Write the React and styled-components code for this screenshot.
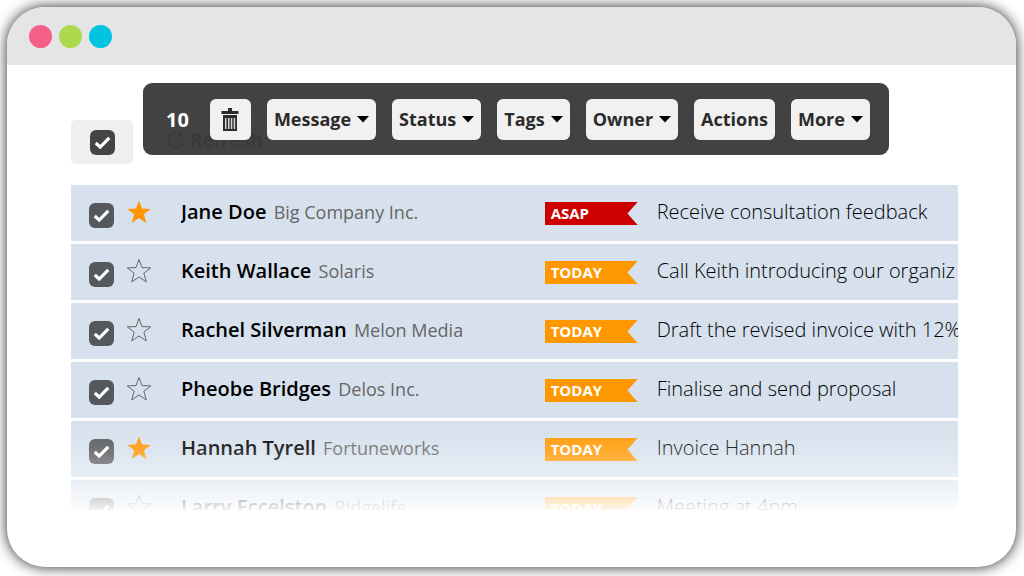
import React, { useState } from 'react';
import styled, { createGlobalStyle } from 'styled-components';

const contacts = [
    { name: 'Jane Doe', company: 'Big Company Inc.', flag: 'ASAP', task: 'Receive consultation feedback', starred: true },
    { name: 'Keith Wallace', company: 'Solaris', flag: 'TODAY', task: 'Call Keith introducing our organiz' },
    { name: 'Rachel Silverman', company: 'Melon Media', flag: 'TODAY', task: 'Draft the revised invoice with 12%' },
    { name: 'Pheobe Bridges', company: 'Delos Inc.', flag: 'TODAY', task: 'Finalise and send proposal' },
    { name: 'Hannah Tyrell', company: 'Fortuneworks', flag: 'TODAY', task: 'Invoice Hannah', starred: true },
    { name: 'Larry Eccelston', company: 'Ridgelife', flag: 'TODAY', task: 'Meeting at 4pm' },
];

const Check = ({ label, dark }) => (
    <CheckBox $dark={dark}>
        <input type="checkbox" defaultChecked aria-label={label} />
        <svg viewBox="0 0 24 24" aria-hidden="true">
            <path d="M5.500 12.500l4.300 3.800L18.500 7.500" />
        </svg>
    </CheckBox>
);

const Star = ({ starred, name }) => {
    const [on, setOn] = useState(!!starred);
    return (
        <StarButton type="button" $on={on} aria-pressed={on} aria-label={`Star ${name}`} onClick={() => setOn(!on)}>
            <svg viewBox="0 0 24 24" aria-hidden="true">
                <path d="M12 .5L15 8.600 23.700 8.900 16.850 14.200 19.300 22.900 12 18 4.700 22.900 7.150 14.200 .3 8.900 9 8.600z" />
            </svg>
        </StarButton>
    );
};

const Menu = ({ children }) => (
    <ToolButton type="button" aria-haspopup="menu">
        {children}
        <Caret viewBox="0 0 12 7" aria-hidden="true"><path d="M0 0h12L6 6.600z" /></Caret>
    </ToolButton>
);

const App = () => (
    <>
        <GlobalStyle />
        <Window>
            <TitleBar>
                <Dot $color="#f66088" />
                <Dot $color="#acd94e" />
                <Dot $color="#00c4e0" />
            </TitleBar>
            <Content>
                <Header>
                    <SelectAll><Check label="Select all" dark /></SelectAll>
                    <Refresh type="button">
                        <svg viewBox="0 0 18 18" aria-hidden="true"><path d="M14 3.500A7.200 7.200 0 1 0 16 11M14.500 0v4.500H10" /></svg>
                        Refresh
                    </Refresh>
                    <Toolbar role="toolbar">
                        <Count>10</Count>
                        <ToolButton type="button" aria-label="Delete" $square>
                            <svg width="18" height="23" viewBox="0 0 18 23" aria-hidden="true">
                                <path fill="#2b2b2b" d="M7 0h4v3h6.500v3H.5V3H7zM2 7h14v16H2z" />
                                <path fill="#d4d4d4" d="M4 10h1.500v11H4zM7 10h1.500v11H7zM9.800 10h1.500v11H9.800zM12.700 10h1.500v11h-1.500z" />
                            </svg>
                        </ToolButton>
                        <Menu>Message</Menu>
                        <Menu>Status</Menu>
                        <Menu>Tags</Menu>
                        <Menu>Owner</Menu>
                        <ToolButton type="button">Actions</ToolButton>
                        <Menu>More</Menu>
                    </Toolbar>
                </Header>
                <List>
                    <Table>
                        <colgroup>
                            <col width="56" />
                            <col width="54" />
                            <col width="41%" />
                            <col width="112" />
                            <col />
                        </colgroup>
                        <tbody>
                            {contacts.map(item => (
                                <Row key={item.name}>
                                    <CheckCell><Check label={`Select ${item.name}`} /></CheckCell>
                                    <Cell><Star starred={item.starred} name={item.name} /></Cell>
                                    <Cell><Name>{item.name}</Name> <Company>{item.company}</Company></Cell>
                                    <FlagCell><Ribbon $urgent={item.flag === 'ASAP'}>{item.flag}</Ribbon></FlagCell>
                                    <Cell>{item.task}</Cell>
                                </Row>
                            ))}
                        </tbody>
                    </Table>
                </List>
            </Content>
        </Window>
    </>
);

export default App;

const GlobalStyle = createGlobalStyle`
    * {
        box-sizing: border-box;
    }
    body {
        margin: 0;
        background: #fff;
        overflow: hidden;
        font-family: 'Open Sans', 'Noto Sans', sans-serif;
    }
    button {
        font-family: inherit;
        cursor: pointer;
    }
`;

const Window = styled.main`
    min-height: calc(100vh - 16px);
    margin: 7px 8px 9px 7px;
    border-radius: 38px;
    overflow: hidden;
    background: #fff;
    box-shadow: 0 0 14px rgba(0, 0, 0, 0.85);
`;

const TitleBar = styled.header`
    display: flex;
    align-items: center;
    gap: 7px;
    height: 58px;
    padding-left: 22px;
    background: #e5e5e5;
`;

const Dot = styled.span`
    width: 23px;
    height: 23px;
    border-radius: 50%;
    background: ${props => props.$color};
`;

const Content = styled.section`
    padding: 55px 58px 57px 64px;
`;

const Header = styled.div`
    position: relative;
    display: flex;
    gap: 24px;
    height: 44px;
    margin-bottom: 21px;
`;

const SelectAll = styled.div`
    display: grid;
    place-items: center;
    width: 62px;
    border-radius: 5px;
    background: #efefef;
`;

const Refresh = styled.button`
    display: flex;
    align-items: center;
    gap: 5px;
    padding: 0 10px 4px;
    border: 0;
    background: none;
    color: #000;
    font-size: 19px;
    font-weight: 700;

    svg {
        width: 18px;
        height: 18px;
        fill: none;
        stroke: #000;
        stroke-width: 2;
    }
`;

const Toolbar = styled.div`
    position: absolute;
    top: -37px;
    left: 72px;
    display: flex;
    align-items: center;
    gap: 16px;
    height: 72px;
    padding: 0 19px 0 23px;
    border-radius: 9px;
    background: rgba(60, 60, 60, 0.97);
`;

const Count = styled.span`
    margin-right: 5px;
    color: #fff;
    font-size: 20px;
    font-weight: 700;
`;

const ToolButton = styled.button`
    display: flex;
    align-items: center;
    justify-content: center;
    gap: 6px;
    height: 41px;
    width: ${props => (props.$square ? '41px' : 'auto')};
    padding: ${props => (props.$square ? '0' : '0 7px')};
    border: 0;
    border-radius: 6px;
    background: #f1f1f1;
    color: #2b2b2b;
    font-size: 18px;
    font-weight: 700;
    white-space: nowrap;
`;

const Caret = styled.svg`
    width: 12px;
    height: 7px;
    fill: #000;
`;

const List = styled.div`
    position: relative;
    max-height: 325px;
    overflow: hidden;

    &::after {
        content: '';
        position: absolute;
        right: 0;
        bottom: 0;
        left: 0;
        height: 90px;
        background: linear-gradient(
            rgba(255, 255, 255, 0),
            rgba(255, 255, 255, 0.15) 30%,
            rgba(255, 255, 255, 0.38) 60%,
            rgba(255, 255, 255, 0.92)
        );
        pointer-events: none;
    }
`;

const Table = styled.table`
    width: 100%;
    table-layout: fixed;
    border-spacing: 0;
`;

const Row = styled.tr`
    height: 59px;
`;

const Cell = styled.td`
    height: 59px;
    padding: 0 0 2px;
    border-bottom: 3px solid #fff;
    background: #d6e1ed;
    color: #000;
    font-size: 20px;
    font-weight: 300;
    line-height: 28px;
    vertical-align: middle;
    white-space: nowrap;
    overflow: hidden;
`;

const CheckCell = styled(Cell)`
    padding: 5px 0 0 18px;
`;

const FlagCell = styled(Cell)`
    padding: 1px 0 0;
`;

const CheckBox = styled.span`
    display: grid;
    width: 25px;
    height: 25px;

    input,
    svg {
        grid-area: 1 / 1;
        width: 25px;
        height: 25px;
        margin: 0;
    }
    input {
        appearance: none;
        border-radius: 6px;
        background: ${props => (props.$dark ? '#444' : '#55585c')};
    }
    svg {
        fill: none;
        stroke: #fff;
        stroke-width: 3;
        pointer-events: none;
    }
    input:not(:checked) + svg {
        visibility: hidden;
    }
`;

const StarButton = styled.button`
    display: block;
    padding: 0;
    border: 0;
    background: none;

    svg {
        display: block;
        width: 24px;
        height: 24px;
        fill: ${props => (props.$on ? '#ff9500' : 'none')};
        stroke: ${props => (props.$on ? 'none' : '#666')};
        stroke-width: 1;
        overflow: visible;
    }
`;

const Name = styled.strong`
    margin-right: 2px;
    color: #000;
    font-weight: 600;
`;

const Company = styled.span`
    color: #666;
    font-size: 18px;
    font-weight: 400;
`;

const Ribbon = styled.span`
    display: block;
    width: 93px;
    padding-left: 6px;
    clip-path: polygon(0 0, 100% 0, 89% 50%, 100% 100%, 0 100%);
    background: ${props => (props.$urgent ? '#c00' : '#ff9800')};
    color: #fff;
    font-size: 15px;
    font-weight: 700;
    line-height: 23px;
`;
